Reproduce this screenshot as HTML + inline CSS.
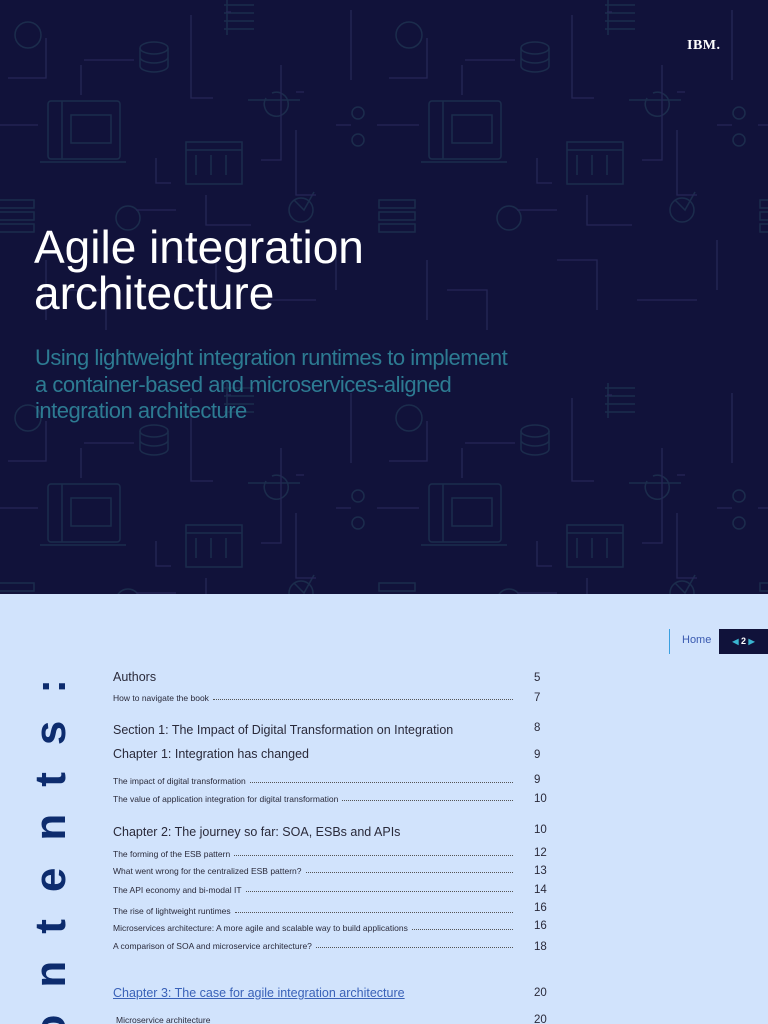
<!DOCTYPE html>
<html><head><meta charset="utf-8"><style>
*{margin:0;padding:0;box-sizing:border-box}
html{width:768px;height:1024px;overflow:hidden}
body{width:768px;height:1024px;overflow:hidden;background:#d1e3fc;font-family:"Liberation Sans",sans-serif;position:relative}
#wrap{position:absolute;left:0;top:0;width:768px;height:1024px;overflow:hidden}
#top{position:absolute;left:0;top:0;width:768px;height:594px;background:#11123a;overflow:hidden}
#top svg{position:absolute;left:0;top:0}
h1{position:absolute;left:34px;top:224px;color:#fff;font-weight:normal;font-size:46px;line-height:46px;letter-spacing:0}
.sub{position:absolute;left:35px;top:345px;color:#2d7b92;font-size:22px;line-height:26.5px;letter-spacing:-0.5px;white-space:nowrap}
.ibm{position:absolute;left:687px;top:38px;color:#fff;font-weight:bold;font-size:14px;letter-spacing:0.5px;font-family:"Liberation Serif",serif}
.nav{position:absolute;left:669px;top:629px;height:25px;border-left:1px solid #3aa0e0;}
.home{position:absolute;left:682px;top:634px;font-size:11px;color:#3a5ab0}
.pg{position:absolute;left:719px;top:629px;width:49px;height:25px;background:#10123a;color:#fff;font-size:9px;font-weight:bold;text-align:center;line-height:25px}
.pg i{color:#3ab5d0;font-style:normal;font-size:8px}
.vert{position:absolute;left:33px;top:652px;width:372px;height:36px;transform-origin:0 0;transform:translateY(372px) rotate(-90deg);direction:rtl;overflow:hidden;white-space:nowrap;color:#0d2c6e;font-size:44px;letter-spacing:27px;line-height:36px;font-weight:bold;text-align:right}
.vert span{direction:ltr;unicode-bidi:isolate}
.r{position:absolute;left:113px;color:#2a2a3a;white-space:nowrap}
.big{font-size:12.5px}
.sm{font-size:8.5px;width:400px;display:flex}
.sm .d{flex:1;border-bottom:1px dotted #555;margin:0 0 3px 4px}
.n{position:absolute;left:534px;font-size:11.5px;color:#2a2a3a}
.link{color:#3a62b8;text-decoration:underline}
.cut{height:10px;overflow:hidden;line-height:12px}
</style></head><body><div id="wrap">
<div id="top">
<svg width="768" height="594">
<defs><pattern id="p" width="381" height="383" patternUnits="userSpaceOnUse" x="-4" y="0">
<g fill="none" stroke="#1b2c4c" stroke-width="1.5">
<rect x="52" y="101" width="72" height="58" rx="3"/><rect x="75" y="115" width="40" height="28"/><path d="M44 162h86M66 101v58"/>
<rect x="190" y="142" width="56" height="42"/><path d="M190 150h56M200 155v20M215 155v20M230 155v20"/>
<ellipse cx="158" cy="48" rx="14" ry="6"/><path d="M144 48v18a14 6 0 0 0 28 0V48M144 57a14 6 0 0 0 28 0"/>
<circle cx="32" cy="35" r="13"/><path d="M231 0v35M228 5h30M228 13h30M228 21h30M228 29h30"/>
<circle cx="132" cy="218" r="12"/><circle cx="305" cy="210" r="12"/><path d="M298 200l10 10 10-18"/>
<path d="M270 98a12 12 0 1 0 6 -5M252 100h52"/>
<circle cx="362" cy="113" r="6"/><circle cx="362" cy="140" r="6"/>
<rect x="2" y="200" width="36" height="8"/><rect x="2" y="212" width="36" height="8"/><rect x="2" y="224" width="36" height="8"/>
</g>
<g fill="none" stroke="#252656" stroke-width="1.3">
<path d="M0 125h42M50 38v40H12M85 65v30M88 60h50M160 158v25h15M195 15V98h22M230 12h5M300 92h8M285 65V160h-20M300 130V195h20M355 80V10M340 125h15M140 210h40M210 195v30h45M50 260v60M70 290h40v40M180 260h40v50M260 300h60M340 240v50"/>
</g>
</pattern></defs>
<rect width="768" height="594" fill="url(#p)"/>
</svg>
<div class="ibm">IBM.</div>
<h1>Agile integration<br>architecture</h1>
<div class="sub">Using lightweight integration runtimes to implement<br>a container-based and microservices-aligned<br>integration architecture</div>
</div>
<div class="nav"></div><div class="home">Home</div>
<div class="pg"><i>◀</i> 2 <i>▶</i></div>
<div class="vert"><span>Contents:</span></div>
<div class="r big" style="top:670px">Authors</div><div class="n" style="top:672px">5</div>
<div class="r sm" style="top:693px">How to navigate the book<span class="d"></span></div><div class="n" style="top:692px">7</div>
<div class="r big" style="top:723px">Section 1: The Impact of Digital Transformation on Integration</div><div class="n" style="top:722px">8</div>
<div class="r big" style="top:747px">Chapter 1: Integration has changed</div><div class="n" style="top:749px">9</div>
<div class="r sm" style="top:776px">The impact of digital transformation<span class="d"></span></div><div class="n" style="top:774px">9</div>
<div class="r sm" style="top:794px">The value of application integration for digital transformation<span class="d"></span></div><div class="n" style="top:793px">10</div>
<div class="r big" style="top:825px">Chapter 2: The journey so far: SOA, ESBs and APIs</div><div class="n" style="top:824px">10</div>
<div class="r sm" style="top:849px">The forming of the ESB pattern<span class="d"></span></div><div class="n" style="top:847px">12</div>
<div class="r sm" style="top:866px">What went wrong for the centralized ESB pattern?<span class="d"></span></div><div class="n" style="top:865px">13</div>
<div class="r sm" style="top:885px">The API economy and bi-modal IT<span class="d"></span></div><div class="n" style="top:884px">14</div>
<div class="r sm" style="top:906px">The rise of lightweight runtimes<span class="d"></span></div><div class="n" style="top:902px">16</div>
<div class="r sm" style="top:923px">Microservices architecture: A more agile and scalable way to build applications<span class="d"></span></div><div class="n" style="top:920px">16</div>
<div class="r sm" style="top:941px">A comparison of SOA and microservice architecture?<span class="d"></span></div><div class="n" style="top:941px">18</div>
<div class="r big link" style="top:986px">Chapter 3: The case for agile integration architecture</div><div class="n" style="top:987px">20</div>
<div class="r sm cut" style="top:1014px;left:116px">Microservice architecture</div><div class="n cut" style="top:1014px">20</div>
</div></body></html>
